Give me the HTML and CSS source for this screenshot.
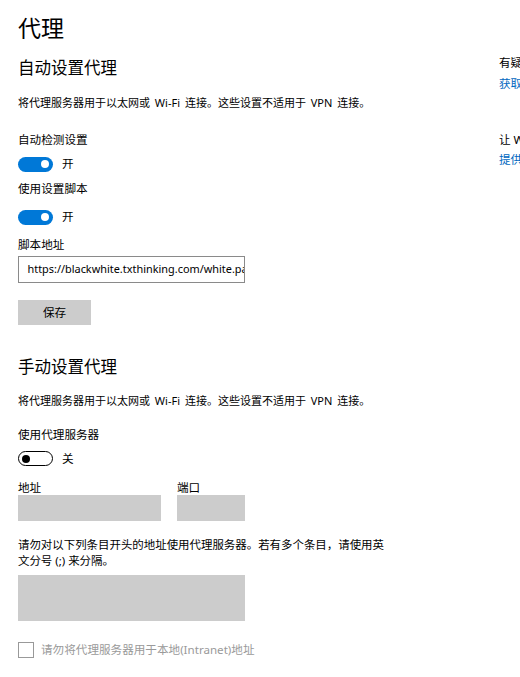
FILE: index.html
```html
<!DOCTYPE html>
<html lang="zh-CN">
<head>
<meta charset="utf-8">
<title>代理</title>
<link rel="stylesheet" href="styles.css">
</head>
<body>
<div class="page">
  <main class="main">
    <h1 class="title">代理</h1>

    <h2 class="section section-auto">自动设置代理</h2>
    <p class="desc desc-auto">将代理服务器用于以太网或 Wi-Fi 连接。这些设置不适用于 VPN 连接。</p>

    <div class="label label-detect">自动检测设置</div>
    <div class="toggle-row row-detect">
      <span class="toggle on"><span class="knob"></span></span>
      <span class="state">开</span>
    </div>

    <div class="label label-script">使用设置脚本</div>
    <div class="toggle-row row-script">
      <span class="toggle on"><span class="knob"></span></span>
      <span class="state">开</span>
    </div>

    <div class="label label-addr">脚本地址</div>
    <div class="input">https://blackwhite.txthinking.com/white.pac</div>
    <div class="button">保存</div>

    <h2 class="section section-manual">手动设置代理</h2>
    <p class="desc desc-manual">将代理服务器用于以太网或 Wi-Fi 连接。这些设置不适用于 VPN 连接。</p>

    <div class="label label-use">使用代理服务器</div>
    <div class="toggle-row row-use">
      <span class="toggle off"><span class="knob"></span></span>
      <span class="state">关</span>
    </div>

    <div class="fields">
      <div class="field field-addr">
        <div class="field-label">地址</div>
        <div class="field-box"></div>
      </div>
      <div class="field field-port">
        <div class="field-label">端口</div>
        <div class="field-box"></div>
      </div>
    </div>

    <p class="para">请勿对以下列条目开头的地址使用代理服务器。若有多个条目，请使用英文分号 (;) 来分隔。</p>
    <div class="bigbox"></div>

    <div class="check-row">
      <span class="checkbox"></span>
      <span class="check-text">请勿将代理服务器用于本地(Intranet)地址</span>
    </div>
  </main>

  <aside class="side">
    <div class="side-head">有疑问？</div>
    <div class="side-link">获取帮助</div>
    <div class="side-head side-head2">让 Windows 变得更好</div>
    <div class="side-link">提供反馈</div>
  </aside>
</div>
</body>
</html>
```

FILE: styles.css
```css
html, body {
  margin: 0;
  padding: 0;
  background: #ffffff;
  overflow: hidden;
}

body {
  width: 520px;
  height: 677px;
  font-family: "Noto Sans", "Noto Sans CJK SC", sans-serif;
  color: #000000;
}

.page {
  display: flex;
  align-items: flex-start;
}

.main {
  flex: 0 0 499px;
  box-sizing: border-box;
  padding-left: 18px;
}

.title {
  margin: 13px 0 0;
  font-size: 23px;
  line-height: 30px;
  font-weight: 400;
}

.section {
  margin: 0;
  font-size: 16.5px;
  line-height: 22px;
  font-weight: 400;
}
.section-auto { margin-top: 13.5px; }
.section-manual { margin-top: 30.5px; }

.desc {
  margin: 0;
  font-size: 11px;
  line-height: 16px;
  white-space: nowrap;
  word-spacing: 2px;
}
.desc-auto { margin-top: 16.5px; }
.desc-manual { margin-top: 15.5px; }

.label {
  font-size: 11.6px;
  line-height: 16px;
}
.label-detect { margin-top: 20.5px; }
.label-script { margin-top: 9px; }
.label-addr { margin-top: 12px; }
.label-use { margin-top: 18px; }

.toggle-row {
  display: flex;
  align-items: center;
  gap: 9px;
  height: 16px;
}
.row-detect { margin-top: 8.5px; }
.row-script { margin-top: 12px; }
.row-use { margin-top: 7.5px; }

.toggle {
  box-sizing: border-box;
  width: 35px;
  height: 15px;
  border-radius: 8px;
  display: flex;
  align-items: center;
  padding: 0 4px;
}
.toggle .knob {
  width: 8px;
  height: 8px;
  border-radius: 50%;
}
.toggle.on {
  background: #0078d7;
  justify-content: flex-end;
}
.toggle.on .knob {
  background: #ffffff;
}
.toggle.off {
  border: 1.6px solid #000000;
  justify-content: flex-start;
  padding: 0 2.5px;
}
.toggle.off .knob {
  background: #000000;
}

.state {
  font-size: 11.6px;
  line-height: 16px;
}

.input {
  box-sizing: border-box;
  margin-top: 3px;
  width: 227px;
  height: 27px;
  border: 1.5px solid #8a8a8a;
  padding: 0 0 0 8.5px;
  font-size: 10.9px;
  line-height: 24px;
  white-space: nowrap;
  overflow: hidden;
}

.button {
  margin-top: 17px;
  width: 73px;
  height: 25px;
  background: #cccccc;
  font-size: 11.6px;
  line-height: 25px;
  text-align: center;
}

.fields {
  display: flex;
  gap: 16px;
  margin-top: 13px;
}
.field-label {
  font-size: 11.6px;
  line-height: 15.5px;
}
.field-box {
  height: 26px;
  background: #cccccc;
}
.field-addr { width: 143px; }
.field-port { width: 68px; }

.para {
  margin: 15.5px 0 0;
  max-width: 372px;
  font-size: 11.45px;
  line-height: 16.5px;
}

.bigbox {
  margin-top: 5.5px;
  width: 227px;
  height: 46px;
  background: #cccccc;
}

.check-row {
  display: flex;
  align-items: center;
  gap: 7px;
  margin-top: 20.5px;
  height: 16px;
}
.checkbox {
  box-sizing: border-box;
  width: 16px;
  height: 16px;
  border: 1.6px solid #999999;
}
.check-text {
  font-size: 11.6px;
  line-height: 16px;
  color: #9a9a9a;
}

.side {
  flex: none;
  padding-top: 54.5px;
  white-space: nowrap;
  font-size: 11.6px;
  line-height: 16px;
}
.side-link {
  margin-top: 5.5px;
  color: #0067c0;
}
.side-head2 {
  margin-top: 40px;
}
.side-head2 + .side-link {
  margin-top: 4px;
}
```
